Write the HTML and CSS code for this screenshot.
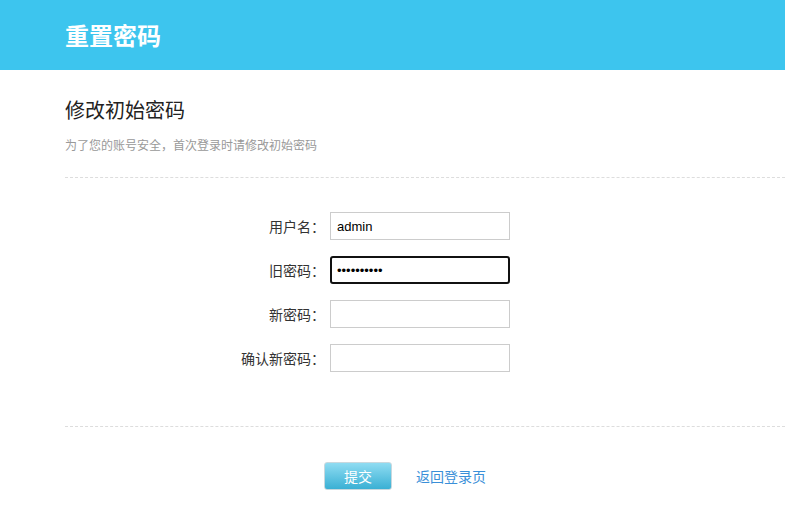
FILE: index.html
```html
<!DOCTYPE html>
<html lang="zh-CN">

<head>
    <meta charset="UTF-8">
    <meta name="viewport" content="width=device-width, initial-scale=1.0">
    <title>重置密码</title>
    <link rel="stylesheet" href="styles.css">
</head>

<body>
    <div class="header">
        <h1>重置密码</h1>
    </div>

    <div class="main">
        <h2>修改初始密码</h2>
        <p class="tip">为了您的账号安全，首次登录时请修改初始密码</p>

        <form id="resetForm" class="reset-form">
            <div class="form-row">
                <label for="username">用户名：</label>
                <input type="text" id="username" name="username" value="admin">
            </div>
            <div class="form-row">
                <label for="oldPassword">旧密码：</label>
                <input type="password" id="oldPassword" name="oldPassword" class="active" value="1234567890">
            </div>
            <div class="form-row">
                <label for="newPassword">新密码：</label>
                <input type="password" id="newPassword" name="newPassword">
            </div>
            <div class="form-row">
                <label for="confirmPassword">确认新密码：</label>
                <input type="password" id="confirmPassword" name="confirmPassword">
            </div>
        </form>

        <div class="actions">
            <button type="submit" form="resetForm" class="btn-submit">提交</button>
            <a href="#" class="back-link">返回登录页</a>
        </div>
    </div>
</body>

</html>
```

FILE: styles.css
```css
body {
    margin: 0;
    font-family: "Microsoft YaHei", "Noto Sans CJK SC", sans-serif;
    background-color: #fff;
    color: #333;
}

.header {
    height: 70px;
    background-color: #3dc5ee;
    padding-left: 65px;
}

.header h1 {
    margin: 0;
    line-height: 70px;
    font-size: 24px;
    font-weight: bold;
    color: #fff;
}

.main {
    padding-left: 65px;
}

.main h2 {
    margin: 28px 0 0;
    font-size: 20px;
    line-height: 24px;
    font-weight: normal;
    color: #222;
}

.tip {
    margin: 15px 0 0;
    font-size: 12px;
    line-height: 16px;
    color: #999;
}

.reset-form {
    margin-top: 24px;
    padding: 34px 0 54px;
    border-top: 1px dashed #ddd;
    border-bottom: 1px dashed #ddd;
    display: flex;
    flex-direction: column;
    gap: 16px;
}

.form-row {
    display: flex;
    align-items: center;
}

.form-row label {
    width: 260px;
    text-align: right;
    font-size: 14px;
    color: #333;
    margin-right: 5px;
}

.form-row input {
    width: 180px;
    height: 28px;
    box-sizing: border-box;
    padding: 0 6px;
    border: 1px solid #ccc;
    font-family: "Liberation Sans", Arial, sans-serif;
    font-size: 13px;
    color: #000;
    outline: none;
}

.form-row input.active {
    border: 2px solid #111;
    border-radius: 3px;
    padding: 0 5px;
}

.actions {
    display: flex;
    align-items: center;
    padding: 35px 0 0 259px;
}

.btn-submit {
    width: 68px;
    height: 28px;
    padding: 0;
    border: 1px solid #c8d8de;
    border-radius: 3px;
    background: linear-gradient(#8fdcf2, #3ab0d4);
    color: #fff;
    font-family: inherit;
    font-size: 14px;
    cursor: pointer;
}

.back-link {
    margin-left: 24px;
    font-size: 14px;
    color: #3a8fd8;
    text-decoration: none;
}
```
